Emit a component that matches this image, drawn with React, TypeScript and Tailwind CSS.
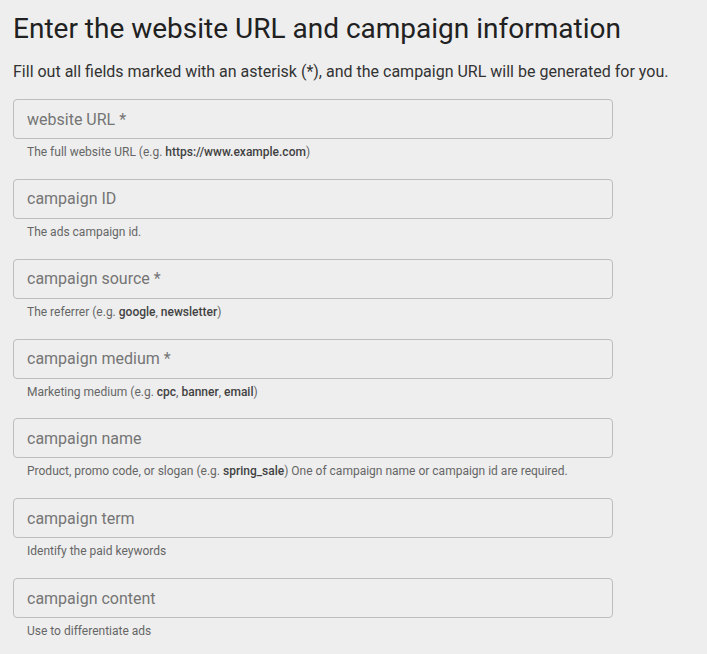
import type { ReactNode } from 'react'

interface Field {
  label: string
  help: ReactNode
}

const B = ({ children }: { children: ReactNode }) => (
  <span className="font-medium text-[#424242]">{children}</span>
)

const fields: Field[] = [
  { label: 'website URL *', help: <>The full website URL (e.g. <B>https://www.example.com</B>)</> },
  { label: 'campaign ID', help: 'The ads campaign id.' },
  { label: 'campaign source *', help: <>The referrer (e.g. <B>google</B>, <B>newsletter</B>)</> },
  { label: 'campaign medium *', help: <>Marketing medium (e.g. <B>cpc</B>, <B>banner</B>, <B>email</B>)</> },
  {
    label: 'campaign name',
    help: (
      <>
        Product, promo code, or slogan (e.g. <B>spring_sale</B>) One of campaign name or campaign id are required.
      </>
    ),
  },
  { label: 'campaign term', help: 'Identify the paid keywords' },
  { label: 'campaign content', help: 'Use to differentiate ads' },
]

export default function App() {
  return (
    <div className="min-h-screen bg-[#eeeeee] px-[13px] pt-[9px] font-['Roboto',sans-serif] text-[#212121]">
      <h1 className="text-[28px] leading-[40px] font-normal">Enter the website URL and campaign information</h1>
      <p className="mt-[11px] text-[16px] leading-[24px] text-[#333333]">
        Fill out all fields marked with an asterisk (*), and the campaign URL will be generated for you.
      </p>
      <div className="mt-[15px] flex flex-col">
        {fields.map((f) => (
          <div key={f.label} className="h-[79.85px]">
            <input
              type="text"
              placeholder={f.label}
              className="h-[40px] w-[600px] rounded-[4px] border border-[#bdbdbd] bg-transparent px-[13px] text-[16px] text-[#212121] placeholder:text-[#757575] outline-none"
            />
            <div className="pl-[14px] pt-[5px] text-[12px] leading-[16px] text-[#666666]">{f.help}</div>
          </div>
        ))}
      </div>
    </div>
  )
}
